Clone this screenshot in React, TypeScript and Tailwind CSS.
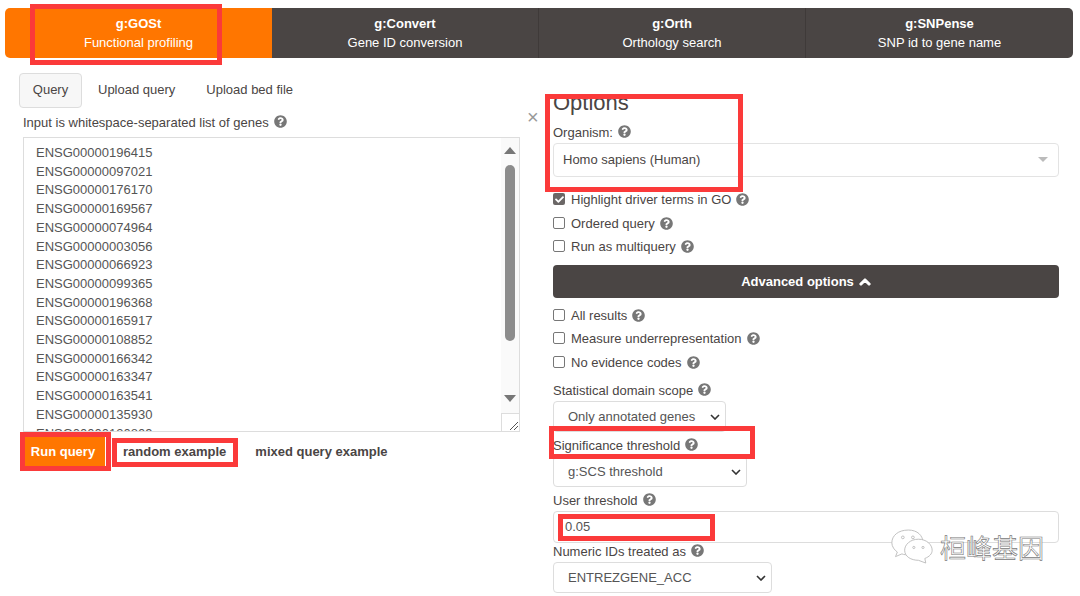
import { FaCheck, FaChevronUp, FaQuestionCircle } from "react-icons/fa";

const genes = [
  "ENSG00000196415",
  "ENSG00000097021",
  "ENSG00000176170",
  "ENSG00000169567",
  "ENSG00000074964",
  "ENSG00000003056",
  "ENSG00000066923",
  "ENSG00000099365",
  "ENSG00000196368",
  "ENSG00000165917",
  "ENSG00000108852",
  "ENSG00000166342",
  "ENSG00000163347",
  "ENSG00000163541",
  "ENSG00000135930",
  "ENSG00000130809",
];

const tools = [
  { name: "g:Convert", desc: "Gene ID conversion" },
  { name: "g:Orth", desc: "Orthology search" },
  { name: "g:SNPense", desc: "SNP id to gene name" },
];

function Help() {
  return <FaQuestionCircle className="inline-block ml-[5px] text-[13px] text-[#777] align-[-1px]" />;
}

function Check({ label, checked, className }: { label: string; checked?: boolean; className?: string }) {
  return (
    <div className={`flex items-center h-[20px] ${className ?? ""}`}>
      {checked ? (
        <span className="w-[12px] h-[12px] rounded-[2px] bg-[#6b6766] flex items-center justify-center">
          <FaCheck className="text-[9px] text-white" />
        </span>
      ) : (
        <span className="w-[12px] h-[12px] rounded-[2px] border border-[#777] bg-white" />
      )}
      <span className="ml-[6px]">{label}</span>
      <Help />
    </div>
  );
}

function Dropdown({ value, className }: { value: string; className: string }) {
  return (
    <div className={`flex items-center justify-between pl-[14px] pr-[5px] bg-white border border-[#ddd] rounded-[4px] text-[#555] ${className}`}>
      <span>{value}</span>
      <svg width="10" height="6" viewBox="0 0 10 6" fill="none" stroke="#333" strokeWidth="1.6">
        <path d="M1 1 L5 5 L9 1" />
      </svg>
    </div>
  );
}

// the red marks drawn over the screenshot
function Mark({ className }: { className: string }) {
  return <div className={`absolute border-[5px] border-[#fb3a3a] pointer-events-none ${className}`} />;
}

export default function App() {
  return (
    <div className="relative w-[1080px] h-[596px] overflow-hidden bg-white text-[13px] leading-[19px] text-[#4a4544] font-['Liberation_Sans',Arial,sans-serif]">
      {/* TOP NAV */}
      <nav className="flex ml-[5px] mt-[8px] w-[1068px] h-[50px] rounded-[5px] overflow-hidden text-center text-white">
        <div className="w-[267px] bg-[#ff7600] pt-[6px]">
          <div className="font-bold">g:GOSt</div>
          <div>Functional profiling</div>
        </div>
        {tools.map((tool) => (
          <div key={tool.name} className="w-[267px] bg-[#4a4544] border-r border-[#3f3a39] last:border-r-0 pt-[6px]">
            <div className="font-bold">{tool.name}</div>
            <div>{tool.desc}</div>
          </div>
        ))}
      </nav>

      <div className="flex">
        {/* QUERY COLUMN */}
        <div className="w-[534px] pl-[19px] shrink-0">
          <div className="flex mt-[15px] h-[35px] items-center">
            <div className="w-[63px] h-[35px] pb-[2px] flex items-center justify-center border border-[#ddd] rounded-[4px] bg-[#f7f7f7]">Query</div>
            <div className="ml-[16px] mb-[2px]">Upload query</div>
            <div className="ml-[31px] mb-[2px]">Upload bed file</div>
          </div>
          <div className="ml-[4px] mt-[5px] h-[19px]">
            Input is whitespace-separated list of genes
            <Help />
          </div>
          <div className="relative flex ml-[4px] mt-[5px] w-[497px] h-[295px] border border-[#ddd] overflow-hidden">
            <div className="flex-1 pl-[12px] pt-[6px] text-[#555] leading-[18.7px]">
              {genes.map((gene) => (
                <div key={gene}>{gene}</div>
              ))}
            </div>
            <div className="w-[18px] h-full flex flex-col items-center bg-[#fafafa]">
              <div className="mt-[9px] w-0 h-0 border-x-[6px] border-x-transparent border-b-[7px] border-b-[#777]" />
              <div className="mt-[11px] w-[10px] h-[176px] rounded-[5px] bg-[#8c8c8c]" />
              <div className="mt-[54px] w-0 h-0 border-x-[6px] border-x-transparent border-t-[7px] border-t-[#777]" />
              <div className="mt-[11px] w-[18px] h-[18px] bg-white border-l border-t border-[#ddd] flex items-end justify-end">
                <svg width="12" height="12" viewBox="0 0 12 12" stroke="#555" fill="none">
                  <path d="M3 11 L11 3 M7 11 L11 7" />
                </svg>
              </div>
            </div>
          </div>
          <div className="flex items-center font-bold mt-[5px] h-[28px]">
            <div className="ml-[6px] w-[80px] h-[30px] pr-[4px] flex items-center justify-center bg-[#ff7600] text-white">Run query</div>
            <div className="ml-[18px]">random example</div>
            <div className="ml-[29px]">mixed query example</div>
          </div>
        </div>

        {/* OPTIONS COLUMN */}
        <div className="w-[506px] ml-[19px] shrink-0">
          <div className="mt-[34px] h-[22px] text-[22px] leading-[22px]">Options</div>
          <div className="mt-[9px] h-[20px]">
            Organism:
            <Help />
          </div>
          <div className="flex items-center justify-between h-[34px] pl-[9px] pr-[10px] pb-[1px] border border-[#e3e3e3] rounded-[4px]">
            <span>Homo sapiens (Human)</span>
            <span className="w-0 h-0 border-x-[5px] border-x-transparent border-t-[5px] border-t-[#bbb]" />
          </div>
          <Check className="mt-[12px]" label="Highlight driver terms in GO" checked />
          <Check className="mt-[4px]" label="Ordered query" />
          <Check className="mt-[3px]" label="Run as multiquery" />
          <div className="flex items-center justify-center gap-[5px] mt-[9px] h-[33px] rounded-[4px] bg-[#4a4544] text-white font-bold">
            Advanced options
            <FaChevronUp className="text-[12px]" strokeWidth={50} />
          </div>
          <Check className="mt-[7px]" label="All results" />
          <Check className="mt-[3px]" label="Measure underrepresentation" />
          <Check className="mt-[4px]" label="No evidence codes" />
          <div className="mt-[9px] h-[20px]">
            Statistical domain scope
            <Help />
          </div>
          <Dropdown value="Only annotated genes" className="w-[173px] h-[31px]" />
          <div className="mt-[4px] h-[20px]">
            Significance threshold
            <Help />
          </div>
          <Dropdown value="g:SCS threshold" className="w-[194px] h-[31px]" />
          <div className="mt-[4px] h-[20px]">
            User threshold
            <Help />
          </div>
          <div className="flex items-center h-[32px] pl-[11px] pb-[1px] border border-[#ddd] rounded-[4px] text-[#555]">0.05</div>
          <div className="mt-[-1px] h-[20px]">
            Numeric IDs treated as
            <Help />
          </div>
          <Dropdown value="ENTREZGENE_ACC" className="w-[219px] h-[31px]" />
        </div>
      </div>

      {/* close icon between the columns */}
      <div className="absolute left-[527px] top-[109px] text-[20px] leading-[16px] text-[#999]">×</div>

      <Mark className="left-[30px] top-[4px] w-[192px] h-[61px]" />
      <Mark className="left-[545px] top-[94px] w-[198px] h-[98px]" />
      <Mark className="left-[20px] top-[432px] w-[91px] h-[39px]" />
      <Mark className="left-[112px] top-[438px] w-[126px] h-[29px]" />
      <Mark className="left-[549px] top-[426px] w-[206px] h-[33px]" />
      <Mark className="left-[558px] top-[514px] w-[157px] h-[27px]" />

      {/* watermark */}
      <div className="absolute left-[890px] top-[528px] flex items-center">
        <svg width="44" height="38" viewBox="0 0 48 41" fill="#fff" stroke="#bbb" strokeWidth="1">
          <path d="M20 2 C9 2 2 8 2 16 C2 20 5 24 8 26 L6 31 L13 28 C15 29 18 29 20 29 C31 29 36 23 36 16 C36 8 30 2 20 2 Z" />
          <path d="M31 12 C22 12 16 18 16 24 C16 31 23 35 31 35 L39 38 L38 33 C43 31 46 28 46 24 C46 18 40 12 31 12 Z" />
          <circle cx="14" cy="10" r="1.5" />
          <circle cx="25" cy="10" r="1.5" />
          <circle cx="26" cy="21" r="1.2" />
          <circle cx="36" cy="21" r="1.2" />
        </svg>
        <span className="ml-[6px] text-[26px] leading-[32px] text-white [-webkit-text-stroke:0.6px_#777] font-['Noto_Sans_CJK_SC',sans-serif]">桓峰基因</span>
      </div>
    </div>
  );
}
